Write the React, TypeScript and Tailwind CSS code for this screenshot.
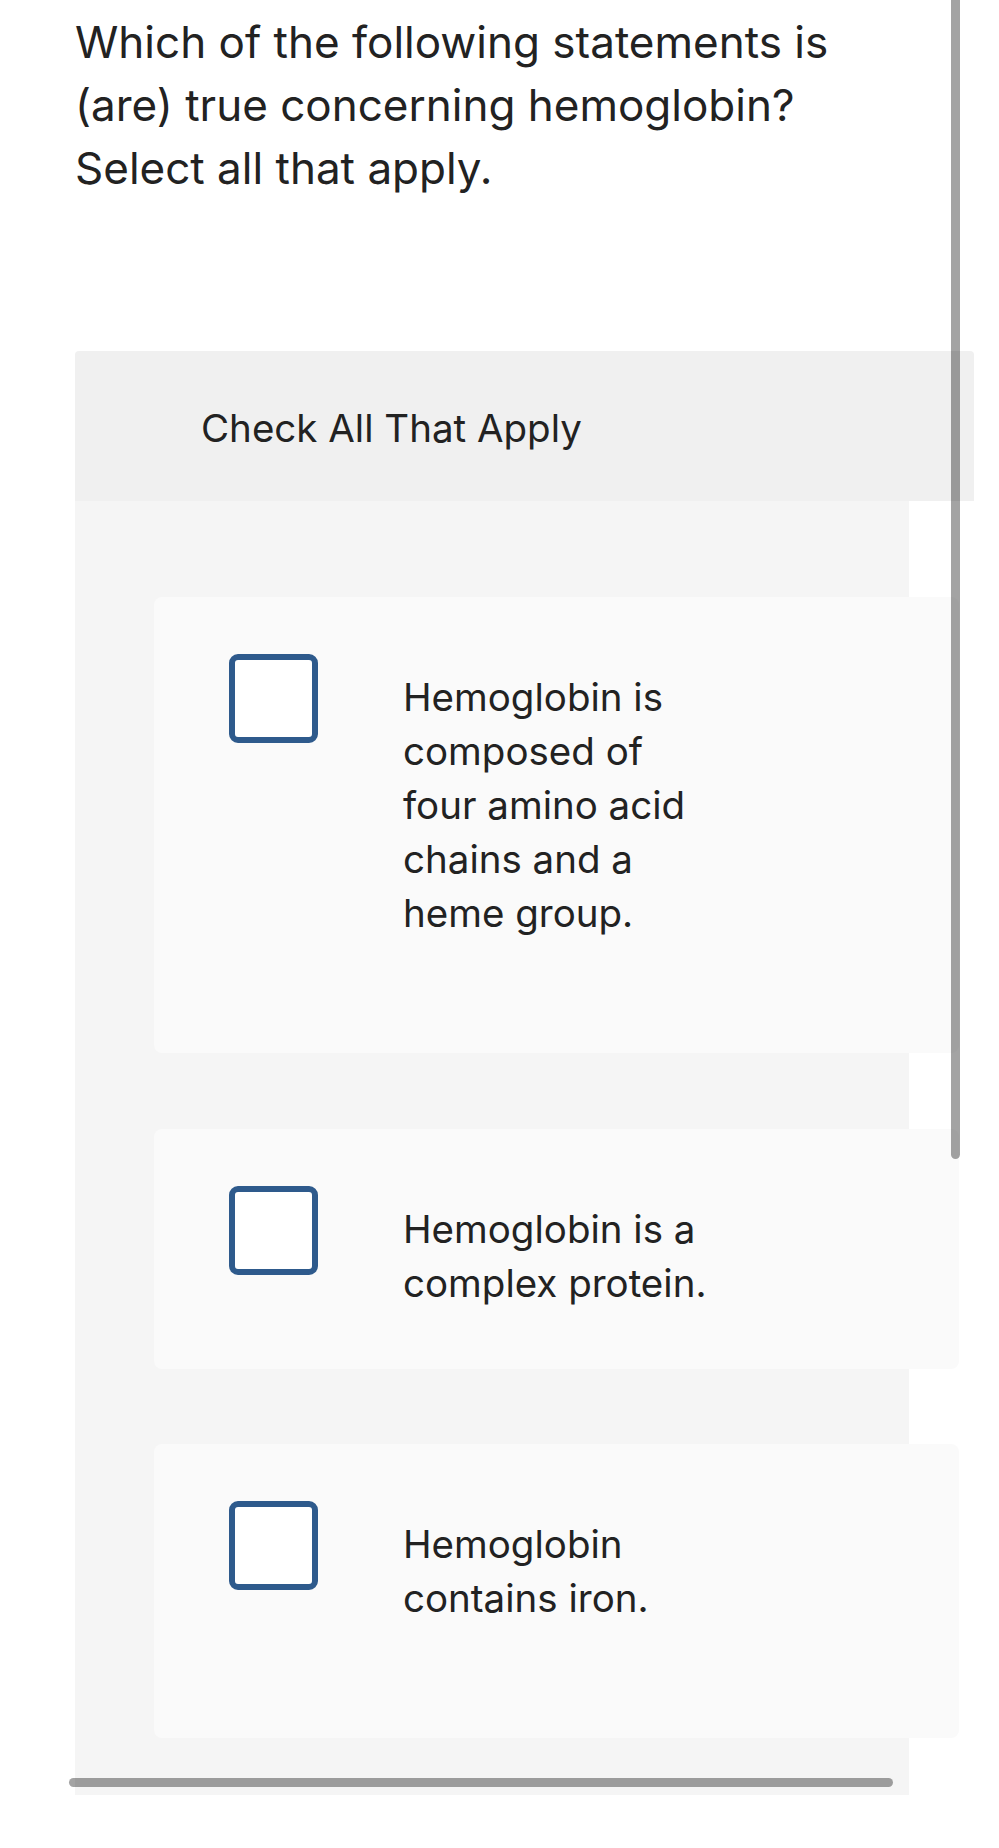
import React from "react";

const font = { fontFamily: "Inter, Lato, 'Noto Sans', sans-serif" };

function Checkbox() {
  return (
    <div className="w-[89px] h-[89px] shrink-0 rounded-[9px] border-[6px] border-[#2e5a8c] bg-white" />
  );
}

function Card({ height, text }: { height: string; text: string[] }) {
  return (
    <div className={`w-[805px] shrink-0 rounded-lg bg-[#fafafa] pt-[57px] pl-[75px] flex items-start ${height}`}>
      <Checkbox />
      <div className="ml-[85px] mt-[16px] w-[312px] text-[38.5px] leading-[54px] text-[#222]">
        {text.map((t, i) => (
          <div key={i} className="whitespace-nowrap">{t}</div>
        ))}
      </div>
    </div>
  );
}

export default function App() {
  return (
    <div className="relative w-[999px] h-[1848px] bg-white overflow-hidden" style={font}>
      <div className="pl-[75px] pt-[11px] text-[44px] leading-[63px] text-[#222]">
        <div>Which of the following statements is</div>
        <div>(are) true concerning hemoglobin?</div>
        <div>Select all that apply.</div>
      </div>

      <div className="ml-[75px] mt-[151px] w-[899px] h-[150px] rounded-t-[4px] bg-[#f0f0f0] flex items-center pl-[126px] pt-[4px]">
        <span className="text-[38.5px] text-[#222] leading-none">Check All That Apply</span>
      </div>

      <div className="ml-[75px] w-[834px] bg-[#f5f5f5] pt-[96px] pb-[57px] pl-[79px] flex flex-col">
        <Card height="h-[456px]" text={["Hemoglobin is", "composed of", "four amino acid", "chains and a", "heme group."]} />
        <div className="h-[76px]" />
        <Card height="h-[240px]" text={["Hemoglobin is a", "complex protein."]} />
        <div className="h-[75px]" />
        <Card height="h-[294px]" text={["Hemoglobin", "contains iron."]} />
      </div>

      <div className="absolute left-[69px] top-[1778px] w-[824px] h-[9px] rounded-full bg-black/[0.36]" />
      <div className="absolute left-[951px] top-0 w-[9px] h-[1159px] rounded-b-full bg-black/[0.36]" />
    </div>
  );
}
